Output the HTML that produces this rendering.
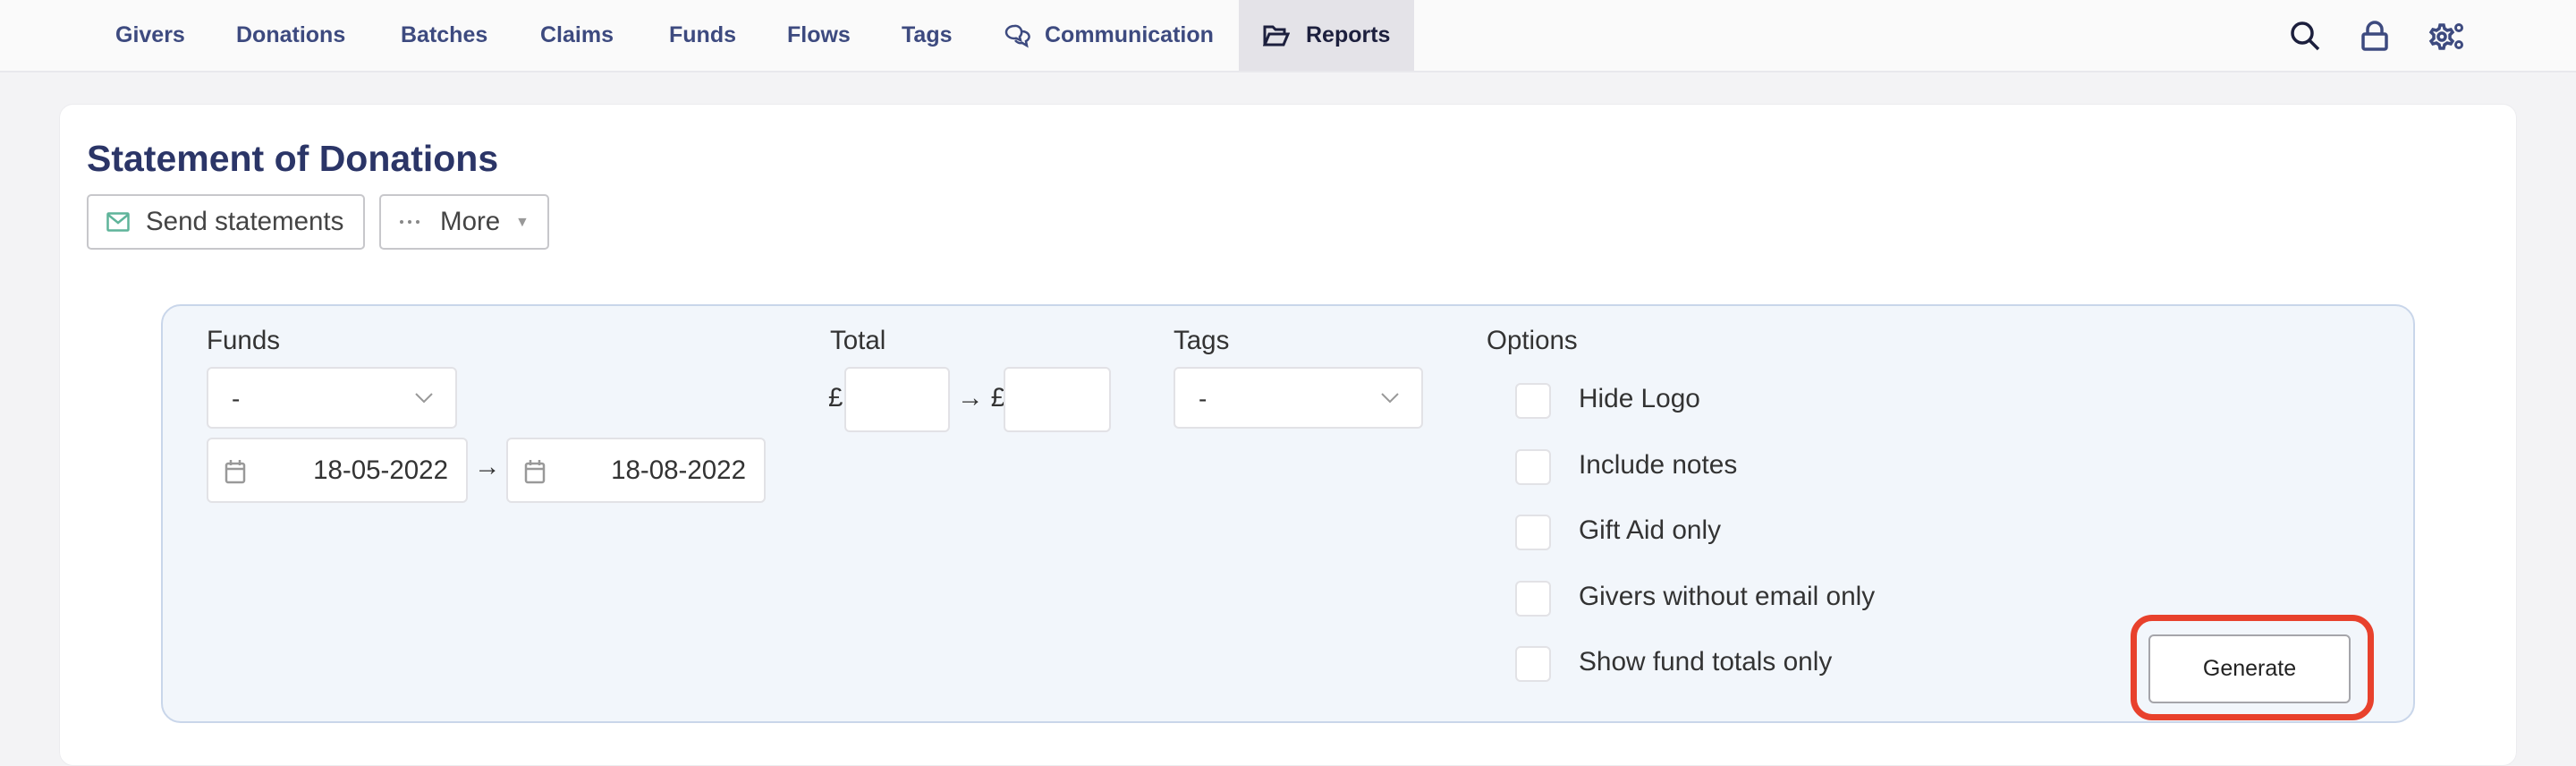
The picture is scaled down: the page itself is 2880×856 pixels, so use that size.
<!DOCTYPE html>
<html><head><meta charset="utf-8"><style>
*{box-sizing:border-box;margin:0;padding:0}
body{width:2880px;height:820px;overflow:hidden;background:#f3f3f5;font-family:"Liberation Sans",sans-serif;position:relative;color:#333}
.nav{position:absolute;left:0;top:0;width:2880px;height:81px;background:#fafafa;border-bottom:2px solid #e8e8ec}
.ni{position:absolute;top:0;height:79px;line-height:79px;font-size:25px;color:#3d4a7f;font-weight:600}
.rep{position:absolute;left:1385px;top:0;width:196px;height:79px;background:#e4e3e8}
.card{position:absolute;left:66px;top:116px;width:2748px;height:740px;background:#fff;border-radius:16px;border:1px solid #ececef}
.t{position:absolute;left:97px;top:154px;font-size:41px;font-weight:bold;color:#2b3567}
.btn{position:absolute;top:217px;height:62px;border:2px solid #c7c7cb;border-radius:5px;background:#fff;font-size:29.5px;color:#444;line-height:58px}
.panel{position:absolute;left:180px;top:340px;width:2520px;height:468px;background:#f2f6fb;border:2px solid #c9d6ea;border-radius:22px}
.lab{position:absolute;font-size:29.5px;color:#333}
.inp{position:absolute;background:#fff;border:2px solid #e2e2e6;border-radius:6px}
.cb{position:absolute;left:1694px;width:40px;height:40px;background:#fff;border:2px solid #e2e2e6;border-radius:6px}
.ol{position:absolute;left:1765px;font-size:29.8px;color:#333}
</style></head><body>
<div class="nav">
<div class="rep"></div>
<div class="ni" style="left:129px">Givers</div>
<div class="ni" style="left:264px">Donations</div>
<div class="ni" style="left:448px">Batches</div>
<div class="ni" style="left:604px">Claims</div>
<div class="ni" style="left:748px">Funds</div>
<div class="ni" style="left:880px">Flows</div>
<div class="ni" style="left:1008px">Tags</div>
<svg style="position:absolute;left:1122px;top:26px" width="32" height="30" viewBox="0 0 32 30" fill="none" stroke="#3d4a7f" stroke-width="2.5"><path d="M12 3a9 7 0 1 0 0 14 9 9 0 0 0 2-0.3L19 19l-1-4a7 7 0 0 0-6-12z"/><path d="M21 9a8 6 0 0 1 4 11l1 5-5-3a8 8 0 0 1-8-3"/></svg>
<div class="ni" style="left:1168px">Communication</div>
<svg style="position:absolute;left:1412px;top:27px" width="30" height="26" viewBox="0 0 30 26" fill="none" stroke="#1c1f3d" stroke-width="3"><path d="M2 23V3h9l3 3h10v5M2 23l5-12h21l-5 12z"/></svg>
<div class="ni" style="left:1460px;color:#1c1f3d">Reports</div>
<svg style="position:absolute;left:2560px;top:23px" width="34" height="34" viewBox="0 0 34 34" fill="none" stroke="#1c1f3d" stroke-width="3.5"><circle cx="14" cy="14" r="11"/><path d="M22 22l10 10"/></svg>
<svg style="position:absolute;left:2640px;top:23px" width="30" height="34" viewBox="0 0 30 34" fill="none" stroke="#3d4a7f" stroke-width="3.5"><rect x="2" y="15" width="26" height="17" rx="2"/><path d="M7 15V10a8 8 0 0 1 16 0v5"/></svg>
<svg style="position:absolute;left:2715px;top:23px" width="44" height="34" viewBox="0 0 44 34" fill="none" stroke="#3d4a7f" stroke-width="3.5"><circle cx="15" cy="18" r="4"/><path d="M13 5h4l1 4 3 2 4-1 2 3-3 3v4l3 3-2 3-4-1-3 2-1 4h-4l-1-4-3-2-4 1-2-3 3-3v-4l-3-3 2-3 4 1 3-2z"/><circle cx="34" cy="8" r="3.5" stroke-width="3"/><circle cx="34" cy="27" r="3.5" stroke-width="3"/></svg>
</div>
<div class="card"></div>
<div class="t">Statement of Donations</div>
<div class="btn" style="left:97px;width:311px"><svg style="position:absolute;left:20px;top:18px" width="26" height="22" viewBox="0 0 26 22" fill="none" stroke="#5fb49a" stroke-width="2.5"><rect x="1.5" y="1.5" width="23" height="19" rx="1"/><path d="M2 3l11 9 11-9"/></svg><span style="position:absolute;left:64px">Send statements</span></div>
<div class="btn" style="left:424px;width:190px"><svg style="position:absolute;left:20px;top:26px" width="24" height="6" viewBox="0 0 24 6" fill="#888"><circle cx="3" cy="3" r="2"/><circle cx="12" cy="3" r="2"/><circle cx="21" cy="3" r="2"/></svg><span style="position:absolute;left:66px">More</span><span style="position:absolute;left:150px;top:1px;font-size:16px;color:#999">▼</span></div>
<div class="panel"></div>
<div class="lab" style="left:231px;top:364px">Funds</div>
<div class="inp" style="left:231px;top:410px;width:280px;height:69px"><span style="position:absolute;left:26px;top:18px;font-size:28px">-</span><svg style="position:absolute;left:230px;top:26px" width="22" height="14" viewBox="0 0 22 14" fill="none" stroke="#999" stroke-width="2"><path d="M2 2l9 9 9-9"/></svg></div>
<div class="inp" style="left:231px;top:489px;width:292px;height:73px"><svg style="position:absolute;left:18px;top:22px" width="24" height="28" viewBox="0 0 24 28" fill="none" stroke="#999" stroke-width="2.5"><rect x="2" y="5" width="20" height="21" rx="2"/><path d="M2 11h20M7 1v6M17 1v6"/></svg><span style="position:absolute;right:20px;top:18px;font-size:29.5px">18-05-2022</span></div>
<div class="lab" style="left:530px;top:505px">→</div>
<div class="inp" style="left:566px;top:489px;width:290px;height:73px"><svg style="position:absolute;left:18px;top:22px" width="24" height="28" viewBox="0 0 24 28" fill="none" stroke="#999" stroke-width="2.5"><rect x="2" y="5" width="20" height="21" rx="2"/><path d="M2 11h20M7 1v6M17 1v6"/></svg><span style="position:absolute;right:20px;top:18px;font-size:29.5px">18-08-2022</span></div>
<div class="lab" style="left:928px;top:364px">Total</div>
<div class="lab" style="left:926px;top:428px">£</div>
<div class="inp" style="left:944px;top:410px;width:118px;height:73px"></div>
<div class="lab" style="left:1070px;top:428px">→ £</div>
<div class="inp" style="left:1122px;top:410px;width:120px;height:73px"></div>
<div class="lab" style="left:1312px;top:364px">Tags</div>
<div class="inp" style="left:1312px;top:410px;width:279px;height:69px"><span style="position:absolute;left:26px;top:18px;font-size:28px">-</span><svg style="position:absolute;left:229px;top:26px" width="22" height="14" viewBox="0 0 22 14" fill="none" stroke="#999" stroke-width="2"><path d="M2 2l9 9 9-9"/></svg></div>
<div class="lab" style="left:1662px;top:364px">Options</div>
<div class="cb" style="top:428px"></div><div class="ol" style="top:429px">Hide Logo</div>
<div class="cb" style="top:502px"></div><div class="ol" style="top:503px">Include notes</div>
<div class="cb" style="top:575px"></div><div class="ol" style="top:576px">Gift Aid only</div>
<div class="cb" style="top:649px"></div><div class="ol" style="top:650px">Givers without email only</div>
<div class="cb" style="top:722px"></div><div class="ol" style="top:723px">Show fund totals only</div>
<div style="position:absolute;left:2382px;top:687px;width:272px;height:118px;border:7px solid #e8412c;border-radius:24px"></div>
<div style="position:absolute;left:2402px;top:709px;width:226px;height:77px;background:#fff;border:2px solid #a5a5aa;border-radius:6px;text-align:center;line-height:73px;font-size:25px;color:#222">Generate</div>
</body></html>
